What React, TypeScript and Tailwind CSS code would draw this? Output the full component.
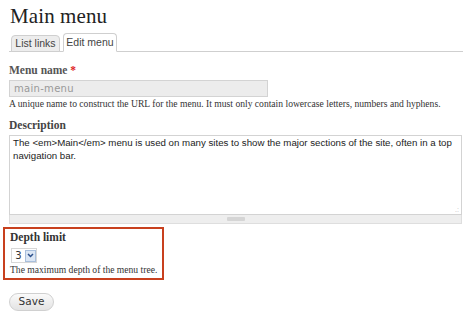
import React from "react";

const serif = { fontFamily: '"Liberation Serif", "DejaVu Serif", serif' };

export default function App() {
  return (
    <div className="w-[474px] h-[316px] bg-white overflow-hidden text-[#333]" style={serif}>
      <div className="pl-[10px] pt-[4px]">
        <h1 className="text-[21px] leading-[25px] text-[#222] font-normal tracking-[0.1px]">Main menu</h1>
      </div>
      {/* tabs */}
      <div className="ml-[9px] mr-[11px] mt-[5px] flex items-end gap-[3px] border-b border-[#cfcfcf] h-[18px] pl-[2px]">
        <div className="h-[17px] w-[49px] -mb-px border border-[#cfcfcf] rounded-t-[4px] bg-[#ededed] flex items-center justify-center text-[10.5px] text-[#444] font-['Liberation_Sans',sans-serif]">
          List links
        </div>
        <div className="h-[19px] w-[54px] -mb-px border border-[#cfcfcf] border-b-white rounded-t-[4px] bg-white flex items-center justify-center text-[10.5px] text-[#444] font-['Liberation_Sans',sans-serif]">
          Edit menu
        </div>
      </div>

      <div className="px-[9px]">
        <div className="mt-[12px] text-[11.5px] leading-[13px] font-bold text-[#555]">
          Menu name <span className="text-[#d22]">*</span>
        </div>
        <div className="mt-[3px] w-[259px] h-[17px] border border-[#d3d3d3] bg-[#ececec] pl-[4px] flex items-center text-[10px] text-[#999] font-['DejaVu_Sans',sans-serif] tracking-[0.3px]">
          main-menu
        </div>
        <div className="mt-[1px] text-[9.6px] leading-[12px] text-[#333] whitespace-nowrap">
          A unique name to construct the URL for the menu. It must only contain lowercase letters, numbers and hyphens.
        </div>

        <div className="mt-[9px] text-[11.5px] leading-[13px] font-bold text-[#444]">Description</div>
        <div className="mt-[3px] w-[453px] h-[80px] border border-[#d3d3d3] relative px-[3px] pt-[1px] text-[9.7px] leading-[12.5px] text-[#222] font-['Liberation_Sans',sans-serif]">
          The &lt;em&gt;Main&lt;/em&gt; menu is used on many sites to show the major sections of the site, often in a top navigation bar.
          <span className="absolute right-[2px] bottom-[1px] text-[7px] leading-[7px] text-[#bbb]">.:</span>
        </div>
        <div className="w-[453px] h-[9px] bg-[#eeeeee] border border-t-0 border-[#dedede] flex items-center justify-center">
          <div className="w-[18px] h-[4px] bg-[#d5d5d5] rounded-[1px]" />
        </div>
      </div>

      <div className="ml-[3px] mt-[3px] w-[161px] h-[53px] border-2 border-[#c8401e] px-[5px] pt-[2px]">
        <div className="text-[11.5px] leading-[13px] font-bold text-[#333]">Depth limit</div>
        <div className="mt-[4px] ml-[1px] w-[26px] h-[15px] border border-[#d7d7d7] bg-white flex items-center">
          <span className="w-[13px] text-center text-[10px] text-[#333] font-['DejaVu_Sans',sans-serif]">3</span>
          <span className="w-[11px] h-[12px] bg-[#dbe6f4] border border-[#a8bfdc] flex items-center justify-center">
            <svg width="7" height="5" viewBox="0 0 7 5">
              <path d="M1 1 L3.5 3.5 L6 1" fill="none" stroke="#2b4f8a" strokeWidth="1.5" />
            </svg>
          </span>
        </div>
        <div className="mt-[1px] text-[9.6px] leading-[12px] text-[#333] whitespace-nowrap">The maximum depth of the menu tree.</div>
      </div>

      <div className="pl-[9px] mt-[13px]">
        <button className="w-[45px] h-[18px] rounded-full border border-[#d0d0d0] bg-gradient-to-b from-[#fafafa] to-[#e3e3e3] text-[10.5px] text-[#333] font-['DejaVu_Sans',sans-serif] flex items-center justify-center">
          Save
        </button>
      </div>
    </div>
  );
}
